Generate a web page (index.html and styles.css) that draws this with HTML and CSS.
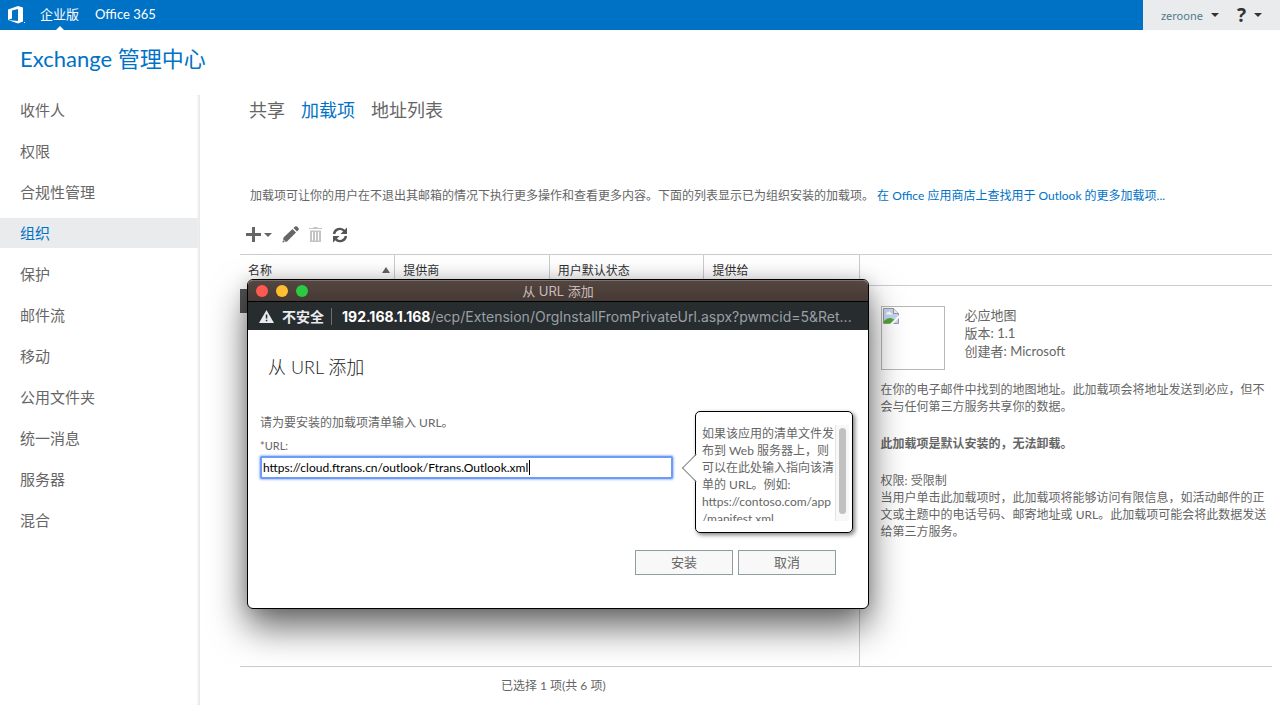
FILE: index.html
```html
<!DOCTYPE html>
<html lang="zh-CN">
<head>
    <meta charset="UTF-8">
    <meta name="viewport" content="width=device-width, initial-scale=1.0">
    <title>Exchange 管理中心</title>
    <link rel="stylesheet" href="styles.css">
</head>
<body>
    <header class="topbar">
        <nav class="topbar-nav">
            <a href="#" class="logo" aria-label="Office">
                <svg width="17" height="18" viewBox="0 0 17 18"><path fill="#fff" d="M0 3.500 10 0l5 1.500v14L10 17.500 0 14l10 1V3L4 4.500v8L0 14z"/><path fill="#fff" d="M16 16h1v1h-1z"/></svg>
            </a>
            <a href="#" class="top-link current">企业版</a>
            <a href="#" class="top-link">Office 365</a>
        </nav>
        <div class="topbar-user">
            <button class="user-btn">zeroone <span class="caret"></span></button>
            <button class="help-btn" aria-label="帮助"><b>?</b> <span class="caret"></span></button>
        </div>
    </header>

    <h1 class="page-title">Exchange 管理中心</h1>

    <div class="layout">
        <nav class="sidebar">
            <a href="#">收件人</a>
            <a href="#">权限</a>
            <a href="#">合规性管理</a>
            <a href="#" class="active">组织</a>
            <a href="#">保护</a>
            <a href="#">邮件流</a>
            <a href="#">移动</a>
            <a href="#">公用文件夹</a>
            <a href="#">统一消息</a>
            <a href="#">服务器</a>
            <a href="#">混合</a>
        </nav>

        <main class="content">
            <nav class="tabs">
                <a href="#">共享</a>
                <a href="#" class="active">加载项</a>
                <a href="#">地址列表</a>
            </nav>

            <p class="intro">加载项可让你的用户在不退出其邮箱的情况下执行更多操作和查看更多内容。下面的列表显示已为组织安装的加载项。 <a href="#">在 Office 应用商店上查找用于 Outlook 的更多加载项...</a></p>

            <div class="toolbar">
                <button class="tool-add" aria-label="添加">
                    <svg width="15" height="15" viewBox="0 0 15 15"><path fill="#666" d="M6 0h3v6h6v3H9v6H6V9H0V6h6z"/></svg>
                    <span class="caret small"></span>
                </button>
                <button aria-label="编辑">
                    <svg width="17" height="17" viewBox="0 0 17 17"><path fill="#666" d="M.5 16.500 1.500 11.500 10.500 3l3.500 3.500-9 9zM11.500 2l1.500-1.500q1-.7 2 0l1.500 1.500q.7 1 0 2L15 5.500z"/><path fill="#fff" d="M1.500 13.500l2 2-.8.3-1.500-1.500z"/></svg>
                </button>
                <button aria-label="删除" disabled>
                    <svg width="13" height="15" viewBox="0 0 13 15"><path fill="#c4c4c4" d="M4.500 0h4v1H13v1H0V1h4.500zM1 3.500h11V15H1z"/><path stroke="#fff" d="M3.500 5v8.500M6.500 5v8.500M9.500 5v8.500"/></svg>
                </button>
                <button aria-label="刷新">
                    <svg width="16" height="16" viewBox="0 0 16 16"><path fill="none" stroke="#555" stroke-width="2.400" d="M2 7a6 6 0 0 1 10.500-3M14 9A6 6 0 0 1 3.500 12"/><path fill="#555" d="M15 .5V7H8.500zM1 15.500V9h6.500z"/></svg>
                </button>
            </div>

            <div class="panes">
                <section class="list">
                    <table>
                        <thead>
                            <tr>
                                <th>名称 <span class="sort"></span></th>
                                <th>提供商</th>
                                <th>用户默认状态</th>
                                <th>提供给</th>
                            </tr>
                        </thead>
                        <tbody>
                            <tr class="selected"><td colspan="4"></td></tr>
                        </tbody>
                    </table>
                </section>
                <aside class="details">
                    <div class="details-head"></div>
                    <div class="details-body">
                        <div class="app">
                            <div class="app-icon">
                                <svg width="16" height="16" viewBox="0 0 16 16"><path fill="#c4d7f5" stroke="#999" d="M.5.5h10l5 5v10H.5z"/><path fill="#fff" d="M3 6q0-2 2-2 2-1.500 3 1 1.500 0 1.500 1.500H3z"/><path fill="#4fa82e" d="M1 15v-2q5-5 9-2l2 1-3 3z"/><path fill="#fff" d="M16 7v3l-6 6H7z"/><path fill="#eee" stroke="#999" d="M10.500.5v5h5"/></svg>
                            </div>
                            <div class="app-meta">
                                <div>必应地图</div>
                                <div>版本: 1.1</div>
                                <div>创建者: Microsoft</div>
                            </div>
                        </div>
                        <p>在你的电子邮件中找到的地图地址。此加载项会将地址发送到必应，但不会与任何第三方服务共享你的数据。</p>
                        <p><b>此加载项是默认安装的，无法卸载。</b></p>
                        <p>权限: 受限制<br>当用户单击此加载项时，此加载项将能够访问有限信息，如活动邮件的正文或主题中的电话号码、邮寄地址或 URL。此加载项可能会将此数据发送给第三方服务。</p>
                    </div>
                </aside>
                <div class="status">已选择 1 项(共 6 项)</div>
            </div>
        </main>
    </div>

    <div class="window" role="dialog" aria-label="从 URL 添加">
        <div class="titlebar">
            <div class="lights"><i class="red"></i><i class="yellow"></i><i class="green"></i></div>
            <span>从 URL 添加</span>
        </div>
        <div class="address">
            <svg width="15" height="13" viewBox="0 0 15 13"><path fill="#e8eaed" d="M7.500 0 15 13H0z"/><path fill="#272c2f" d="M6.800 4.500h1.500V8.500H6.800zM6.800 9.700h1.500v1.500H6.800z"/></svg>
            <span class="insecure">不安全</span>
            <span class="url"><b>192.168.1.168</b>/ecp/Extension/OrgInstallFromPrivateUrl.aspx?pwmcid=5&amp;Ret...</span>
        </div>
        <form class="dialog">
            <h2>从 URL 添加</h2>
            <div class="dialog-main">
                <div class="field">
                    <p>请为要安装的加载项清单输入 URL。</p>
                    <label for="url">*URL:</label>
                    <div class="input-wrap">
                        <input type="text" id="url" value="https://cloud.ftrans.cn/outlook/Ftrans.Outlook.xml">
                        <span class="cursor"></span>
                    </div>
                </div>
                <div class="callout">
                    <div class="callout-text">如果该应用的清单文件发布到 Web 服务器上，则可以在此处输入指向该清单的 URL。例如: https://contoso.com/app<wbr>/manifest.xml</div>
                    <div class="track"><div class="thumb"></div></div>
                </div>
            </div>
            <div class="actions">
                <button type="button">安装</button>
                <button type="button">取消</button>
            </div>
        </form>
    </div>
</body>
</html>
```
FILE: styles.css
```css
* {
    box-sizing: border-box;
}
body {
    margin: 0;
    font-family: Lato, "Noto Sans CJK SC", sans-serif;
    font-size: 12px;
    line-height: 17px;
    color: #666;
    background: #fff;
}
a {
    color: #0072c6;
    text-decoration: none;
}
p, h1, h2 {
    margin: 0;
    font-weight: 400;
}
button {
    font: inherit;
    color: inherit;
    background: none;
    border: 0;
    padding: 0;
}
svg {
    display: block;
    flex: none;
}

/* top bar */
.topbar {
    display: flex;
    justify-content: space-between;
    height: 30px;
    background: #0072c6;
}
.topbar-nav {
    display: flex;
    gap: 16px;
    padding-left: 8px;
}
.logo {
    display: flex;
    align-items: center;
    width: 16px;
}
.top-link {
    position: relative;
    color: #fff;
    font-size: 13px;
    line-height: 29px;
}
.top-link.current::after {
    content: "";
    position: absolute;
    left: 50%;
    bottom: 0;
    margin-left: -4px;
    border: 4px solid transparent;
    border-top: 0;
    border-bottom-color: #fff;
}
.topbar-user {
    display: flex;
    gap: 18px;
    padding: 0 18px;
    background: #eaebec;
}
.topbar-user button {
    display: flex;
    align-items: center;
    gap: 8px;
    color: #4f7a8c;
    font-family: "Noto Sans", sans-serif;
    font-size: 11px;
}
.help-btn b {
    font-size: 19px;
    color: #333;
}
.caret {
    border: 4px solid transparent;
    border-top-color: #333;
    border-bottom: 0;
}
.caret.small {
    border-top-color: #666;
}

.page-title {
    padding: 13px 20px 0;
    height: 65px;
    font-size: 22px;
    line-height: 32px;
    color: #0072c6;
}

/* layout */
.layout {
    display: grid;
    grid-template-columns: 200px 1fr;
}
.sidebar {
    display: flex;
    flex-direction: column;
    gap: 11px;
    min-height: 610px;
    box-shadow: inset -3px 0 2px -1px #e8e8e8;
}
.sidebar a {
    margin-right: 2px;
    padding-left: 20px;
    font-size: 15px;
    line-height: 30px;
    color: #666;
}
.sidebar a.active {
    background: #eaebec;
    color: #0072c6;
}
.content {
    padding: 0 8px 0 40px;
}
.tabs {
    display: flex;
    gap: 16px;
    padding-left: 9px;
    font-size: 18px;
    line-height: 30px;
}
.tabs a {
    color: #666;
}
.tabs a.active {
    color: #0072c6;
}
.intro {
    margin: 62px 0 0 10px;
}

.toolbar {
    display: flex;
    align-items: center;
    gap: 10px;
    height: 40px;
    margin-top: 10px;
    padding: 1px 0 0 6px;
}
.tool-add {
    display: flex;
    align-items: center;
    gap: 3px;
}

/* list and details */
.panes {
    display: grid;
    grid-template-columns: 3fr 2fr;
    grid-template-rows: minmax(412px, auto) auto;
    column-gap: 1px;
    border-top: 1px solid #c8cdd1;
}
.list {
    margin-right: -1px;
    border-right: 1px solid #c8cdd1;
    border-bottom: 1px solid #c8cdd1;
}
.list table {
    width: 100%;
    table-layout: fixed;
    border-collapse: collapse;
}
.list th {
    height: 31px;
    padding: 2px 8px 0;
    text-align: left;
    font-weight: 400;
    color: #333;
    border-bottom: 1px solid #c8cdd1;
    border-right: 1px solid #c8cdd1;
}
.list th:last-child {
    border-right: 0;
}
.sort {
    float: right;
    margin: 5px -4px 0 0;
    border: 4px solid transparent;
    border-top: 0;
    border-bottom: 6px solid #666;
}
.list td {
    height: 27px;
    padding: 0;
    border-top: 5px solid #fff;
    background: #555;
}
.details {
    border-bottom: 1px solid #c8cdd1;
}
.details-head {
    height: 31px;
    border-bottom: 1px solid #c8cdd1;
}
.details-body {
    padding: 20px 4px 0 21px;
}
.details-body p {
    margin-bottom: 20px;
}
.app {
    display: flex;
    gap: 20px;
    margin-bottom: 11px;
    font-size: 13px;
    line-height: 18px;
}
.app-icon {
    width: 64px;
    height: 64px;
    padding: 1px;
    border: 1px solid #b8b8b8;
}
.status {
    padding-top: 10px;
    padding-left: 8px;
    text-align: center;
}

/* popup window */
.window {
    position: absolute;
    left: 247px;
    top: 279px;
    width: 622px;
    border: 1px solid #000;
    border-radius: 6px;
    background: #fff;
    box-shadow: 0 18px 36px rgba(0, 0, 0, 0.6), 0 0 16px rgba(0, 0, 0, 0.15);
}
.titlebar {
    position: relative;
    height: 22px;
    border-radius: 5px 5px 0 0;
    border-top: 1px solid #7a706c;
    border-bottom: 1px solid #000;
    background: linear-gradient(#54453f, #463a36);
    color: #c9bdb9;
    font-family: Inter, "Noto Sans CJK SC", sans-serif;
    font-size: 13px;
    line-height: 21px;
    text-align: center;
}
.lights {
    position: absolute;
    left: 8px;
    top: 4px;
    display: flex;
    gap: 8px;
}
.lights i {
    width: 12px;
    height: 12px;
    border-radius: 50%;
}
.red { background: #ff5a52; }
.yellow { background: #ffbe2f; }
.green { background: #29cc41; }
.address {
    display: flex;
    align-items: center;
    height: 28px;
    padding: 0 11px;
    background: #272c2f;
    color: #9aa0a6;
    font-family: Inter, "Noto Sans CJK SC", sans-serif;
    font-size: 14px;
    white-space: nowrap;
}
.insecure {
    margin-left: 8px;
    padding-right: 7px;
    border-right: 1px solid #6b7075;
    color: #e8eaed;
    font-weight: 700;
}
.url {
    margin-left: 10px;
}
.url b {
    font-weight: 700;
    color: #fff;
}
.dialog {
    padding: 24px 15px 33px 12px;
}
.dialog h2 {
    padding-left: 8px;
    font-size: 18px;
    font-weight: 300;
    line-height: 26px;
    color: #222;
}
.dialog-main {
    display: flex;
    justify-content: space-between;
    margin-top: 31px;
}
.field {
    width: 413px;
    padding-top: 3px;
}
.field label {
    display: block;
    margin-top: 6px;
    font-size: 11px;
}
.input-wrap {
    position: relative;
    margin-top: 2px;
}
.field input {
    display: block;
    width: 100%;
    height: 23px;
    padding: 0 1px;
    border: 2px solid #6f9bf8;
    border-radius: 2px;
    box-shadow: 0 0 2px 1px #a9c4fb;
    outline: none;
    font: inherit;
    color: #000;
}
.cursor {
    position: absolute;
    left: 269px;
    top: 4px;
    width: 1px;
    height: 15px;
    background: #000;
}
.callout {
    position: relative;
    display: flex;
    width: 158px;
    height: 122px;
    padding: 13px 3px 11px 6px;
    border: 1px solid #000;
    border-radius: 5px;
    box-shadow: 2px 2px 4px rgba(0, 0, 0, 0.5);
}
.callout::before {
    content: "";
    position: absolute;
    left: -10px;
    top: 46px;
    width: 19px;
    height: 19px;
    border: 1px solid #888;
    border-top: 0;
    border-right: 0;
    transform: rotate(45deg);
    background: linear-gradient(45deg, #fff 50%, transparent 50%);
}
.callout-text {
    flex: 1;
    overflow: hidden;
    white-space: normal;
}
.track {
    width: 14px;
    padding: 3px;
    border-left: 1px solid #e4e4e4;
    background: #f8f8f8;
}
.thumb {
    height: 86px;
    border-radius: 4px;
    background: #c1c1c1;
}
.actions {
    display: flex;
    justify-content: flex-end;
    gap: 5px;
    margin: 17px 17px 0 0;
}
.actions button {
    width: 98px;
    height: 25px;
    border: 1px solid #8f9fa0;
    background: #f8f8f8;
    font-size: 13px;
}
```
